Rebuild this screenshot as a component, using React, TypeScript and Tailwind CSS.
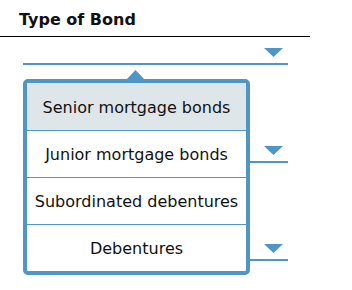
import React from 'react';

const options = [
  'Senior mortgage bonds',
  'Junior mortgage bonds',
  'Subordinated debentures',
  'Debentures',
];

const Arrow = () => (
  <svg className="absolute right-[5px] bottom-[6px]" width="19" height="9" viewBox="0 0 19 9">
    <polygon points="0,0 19,0 9.5,9" fill="#4e96c6" />
  </svg>
);

export default function App() {
  return (
    <div
      className="relative w-[352px] h-[290px] overflow-hidden bg-white text-[#111]"
      style={{ fontFamily: '"DejaVu Sans", Verdana, sans-serif' }}
    >
      {/* Column header */}
      <div className="w-[310px] border-b border-black pl-[19px] pt-[10px] pb-[7px]">
        <h3 className="text-[16px] font-bold leading-[19px]">Type of Bond</h3>
      </div>

      {/* Select rows */}
      <div className="flex flex-col gap-[70px] pl-[23px]">
        {[0, 1, 2].map((i) => (
          <div key={i} className="relative h-[28px] w-[265px] border-b-2 border-[#4e96c6]">
            <Arrow />
          </div>
        ))}
      </div>

      {/* Open dropdown menu */}
      <div className="absolute left-[23px] top-[79px] w-[227px] rounded-[5px] border-4 border-[#4e96c6] bg-white">
        <svg className="absolute left-[99px] top-[-13px]" width="19" height="10" viewBox="0 0 19 10">
          <polygon points="0,10 9.5,0 19,10" fill="#4e96c6" />
        </svg>
        {options.map((opt, i) => (
          <div
            key={opt}
            className={
              'flex h-[47px] items-center justify-center pt-[2px] text-[16px] ' +
              (i === 0 ? 'bg-[#dfe6e9]' : 'border-t border-[#4e96c6]')
            }
          >
            {opt}
          </div>
        ))}
      </div>
    </div>
  );
}
